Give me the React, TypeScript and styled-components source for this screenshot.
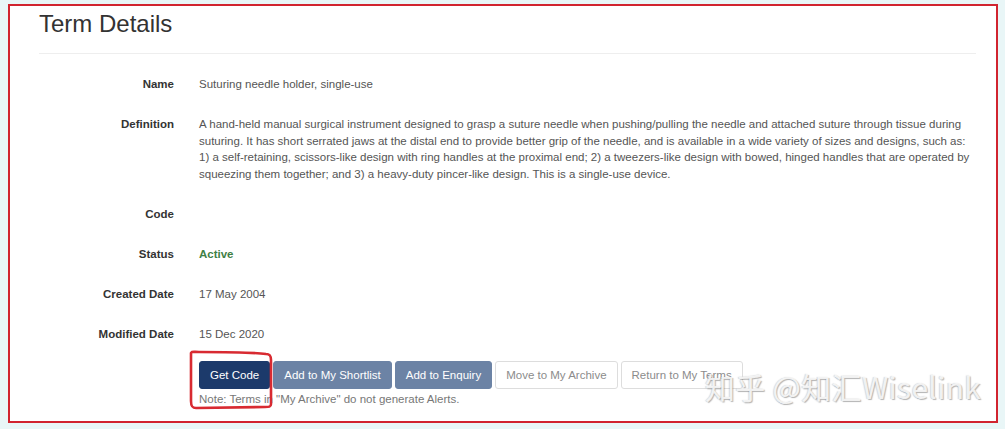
import React from 'react'
import styled, { createGlobalStyle } from 'styled-components'

const GlobalStyle = createGlobalStyle`
  html, body {
    margin: 0;
    padding: 0;
    background: #e9f6f7;
    font-family: "Liberation Sans", Arial, sans-serif;
  }
`

const Frame = styled.div`
  position: relative;
  box-sizing: border-box;
  margin: 4px 0 0 8px;
  width: 990px;
  height: 419px;
  border: 2px solid #d1242f;
  background: #ffffff;
  padding: 5px 20px 0 29px;
`

const Title = styled.h1`
  margin: 0;
  font-size: 24px;
  line-height: 1.1;
  font-weight: 400;
  color: #333;
`

const Rule = styled.div`
  margin-top: 16px;
  border-top: 1px solid #eeeeee;
`

const Details = styled.div`
  display: grid;
  grid-template-columns: 135px 1fr;
  column-gap: 25px;
  row-gap: 23.7px;
  margin-top: 22px;
  font-size: 11.5px;
  line-height: 16.4px;
`

const Label = styled.div`
  text-align: right;
  font-weight: 700;
  color: #333;
`

const Value = styled.div<{ $status?: boolean }>`
  color: ${p => (p.$status ? '#3f8045' : '#555')};
  font-weight: ${p => (p.$status ? 700 : 400)};
  min-height: 16px;
`

const Actions = styled.div`
  margin: 19px 0 0 160px;
`

const ButtonRow = styled.div`
  display: flex;
  gap: 3px;
`

const Button = styled.button<{ $kind: 'primary' | 'muted' | 'outline' }>`
  box-sizing: border-box;
  height: 28px;
  padding: 0 10px;
  border-radius: 3px;
  font-family: "Liberation Sans", Arial, sans-serif;
  font-size: 11.5px;
  cursor: pointer;
  border: 1px solid
    ${p => (p.$kind === 'primary' ? '#1c3a6b' : p.$kind === 'muted' ? '#6c83a5' : '#dddddd')};
  background: ${p => (p.$kind === 'primary' ? '#1c3a6b' : p.$kind === 'muted' ? '#6c83a5' : '#ffffff')};
  color: ${p => (p.$kind === 'outline' ? '#8c8c8c' : '#ffffff')};
`

const Note = styled.div`
  margin-top: 3px;
  font-size: 11.5px;
  line-height: 14px;
  color: #777;
`

const Scribble = styled.svg`
  position: absolute;
  left: 170px;
  top: 336px;
  pointer-events: none;
`

const Watermark = styled.div`
  position: absolute;
  left: 695px;
  top: 360px;
  font-family: "Noto Sans CJK SC", "Noto Sans", sans-serif;
  font-size: 30px;
  line-height: 40px;
  letter-spacing: 0.3px;
  color: rgba(248, 248, 248, 0.92);
  text-shadow: 1px 1px 1px rgba(90, 90, 90, 0.45), -1px 0 1px rgba(130, 130, 130, 0.3);
  white-space: nowrap;
  pointer-events: none;
`

const rows: { label: string; value: string; status?: boolean }[] = [
  { label: 'Name', value: 'Suturing needle holder, single-use' },
  {
    label: 'Definition',
    value:
      'A hand-held manual surgical instrument designed to grasp a suture needle when pushing/pulling the needle and attached suture through tissue during suturing. It has short serrated jaws at the distal end to provide better grip of the needle, and is available in a wide variety of sizes and designs, such as: 1) a self-retaining, scissors-like design with ring handles at the proximal end; 2) a tweezers-like design with bowed, hinged handles that are operated by squeezing them together; and 3) a heavy-duty pincer-like design. This is a single-use device.',
  },
  { label: 'Code', value: '' },
  { label: 'Status', value: 'Active', status: true },
  { label: 'Created Date', value: '17 May 2004' },
  { label: 'Modified Date', value: '15 Dec 2020' },
]

export default function App() {
  return (
    <>
      <GlobalStyle />
      <Frame>
        <Title>Term Details</Title>
        <Rule />
        <Details>
          {rows.map(r => (
            <React.Fragment key={r.label}>
              <Label>{r.label}</Label>
              <Value $status={r.status}>{r.value}</Value>
            </React.Fragment>
          ))}
        </Details>
        <Actions>
          <ButtonRow>
            <Button $kind='primary'>Get Code</Button>
            <Button $kind='muted'>Add to My Shortlist</Button>
            <Button $kind='muted'>Add to Enquiry</Button>
            <Button $kind='outline'>Move to My Archive</Button>
            <Button $kind='outline'>Return to My Terms</Button>
          </ButtonRow>
          <Note>Note: Terms in "My Archive" do not generate Alerts.</Note>
        </Actions>
        <Scribble width='100' height='75' viewBox='0 0 100 75'>
          <path
            d='M11 12 C11 9 13 10 19 10 C40 10 70 10 86 12 C90 12 91 14 91 18 L91 62 C91 65 89 65 85 65 L16 66 C12 66 11 64 11 59 L11 11'
            fill='none'
            stroke='#d82a31'
            strokeWidth='2.6'
            strokeLinecap='round'
            strokeLinejoin='round'
          />
        </Scribble>
        <Watermark>知乎 @知汇Wiselink</Watermark>
      </Frame>
    </>
  )
}
